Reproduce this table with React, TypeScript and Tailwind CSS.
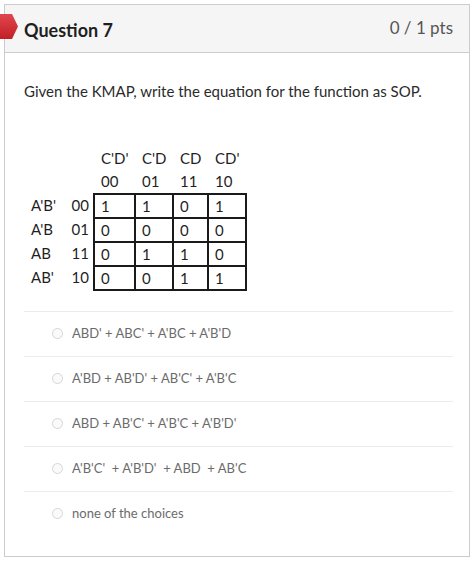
import React from 'react';

const cols = ["C'D'", "C'D", 'CD', "CD'"];
const codes = ['00', '01', '11', '10'];
const rows = [
  { label: "A'B'", code: '00', cells: ['1', '1', '0', '1'] },
  { label: "A'B", code: '01', cells: ['0', '0', '0', '0'] },
  { label: 'AB', code: '11', cells: ['0', '1', '1', '0'] },
  { label: "AB'", code: '10', cells: ['0', '0', '1', '1'] },
];
const widths = ['w-[41px]', 'w-[38px]', 'w-[35px]', 'w-[38px]'];

const choices = [
  "ABD' + ABC' + A'BC + A'B'D",
  "A'BD + AB'D' + AB'C' + A'B'C",
  "ABD + AB'C' + A'B'C + A'B'D'",
  "A'B'C'  + A'B'D'  + ABD  + AB'C",
  'none of the choices',
];

const Flag = () => (
  <svg width="18" height="25" viewBox="0 0 18 25" className="absolute left-[-5px] top-[9px]">
    <defs>
      <linearGradient id="flagFill" x1="0" y1="0" x2="0" y2="1">
        <stop offset="0" stopColor="#e0474d" />
        <stop offset="1" stopColor="#c21f26" />
      </linearGradient>
    </defs>
    <polygon points="0,0 12,0 18,12.5 12,25 0,25" fill="url(#flagFill)" />
  </svg>
);

export default function App() {
  return (
    <div className="w-[474px] h-[566px] bg-white pt-[4px] pl-[4px] font-['Lato','Liberation_Sans',sans-serif]">
      <div className="relative w-[466px] h-[553px] border border-[#c9cdd0] bg-white">
        <Flag />
        <div className="h-[48px] bg-[#f5f5f5] border-b border-[#c9cdd0] flex items-center justify-between pl-[19px] pr-[16px]">
          <h2 className="text-[18px] font-bold text-[#1f1f1f] mt-[4px]">Question 7</h2>
          <span className="text-[17px] text-[#555] mb-[2px]">0 / 1 pts</span>
        </div>

        <div className="pl-[19px] pr-[16px]">
          <p className="mt-[27px] text-[15px] leading-[22px] text-[#2b2b2b]">
            Given the KMAP, write the equation for the function as SOP.
          </p>

          <table className="mt-[44px] border-collapse text-[15px] text-[#1f1f1f]">
            <tbody>
              <tr className="h-[24px]">
                <td className="w-[40px]" />
                <td className="w-[30px]" />
                {cols.map((c, i) => (
                  <td key={c} className={`${widths[i]} pl-[7px]`}>{c}</td>
                ))}
              </tr>
              <tr className="h-[23px]">
                <td />
                <td />
                {codes.map((c, i) => (
                  <td key={c} className={`${widths[i]} pl-[7px]`}>{c}</td>
                ))}
              </tr>
              {rows.map((r) => (
                <tr key={r.label} className="h-[24px]">
                  <td className="pl-[7px]">{r.label}</td>
                  <td className="text-right pr-[4px]">{r.code}</td>
                  {r.cells.map((v, i) => (
                    <td key={i} className="border-2 border-[#1a1a1a] pl-[6px] leading-[18px]">{v}</td>
                  ))}
                </tr>
              ))}
            </tbody>
          </table>

          <div className="mt-[20px]">
            {choices.map((c) => (
              <div key={c} className="h-[45px] flex items-center pl-[28px] border-t border-[#ececec]">
                <span className="w-[11px] h-[11px] rounded-full border border-[#d6d6d6] bg-[#fafafa] mr-[9px] shrink-0" />
                <span className="text-[13px] text-[#6b6b6b] whitespace-pre">{c}</span>
              </div>
            ))}
          </div>
        </div>
      </div>
    </div>
  );
}
